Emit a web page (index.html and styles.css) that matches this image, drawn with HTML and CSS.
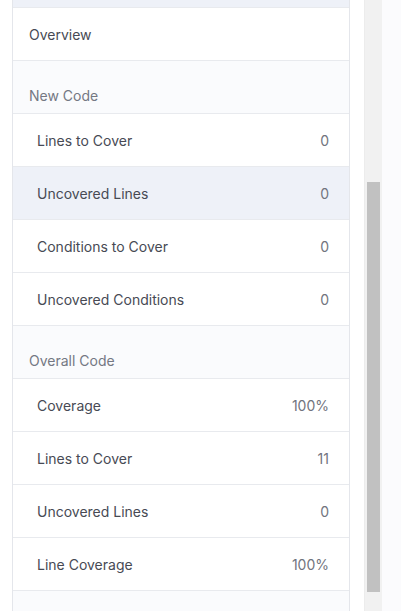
FILE: index.html
```html
<!DOCTYPE html>
<html>
<head>
<meta charset="utf-8">
<link rel="stylesheet" href="styles.css">
</head>
<body>
<div class="layout">
  <div class="panel">
    <div class="row row-partial"></div>
    <div class="row row-top"><span>Overview</span></div>
    <div class="row row-header"><span>New Code</span></div>
    <div class="row row-item"><span>Lines to Cover</span><span class="val">0</span></div>
    <div class="row row-item row-active"><span>Uncovered Lines</span><span class="val">0</span></div>
    <div class="row row-item"><span>Conditions to Cover</span><span class="val">0</span></div>
    <div class="row row-item"><span>Uncovered Conditions</span><span class="val">0</span></div>
    <div class="row row-header"><span>Overall Code</span></div>
    <div class="row row-item"><span>Coverage</span><span class="val">100%</span></div>
    <div class="row row-item"><span>Lines to Cover</span><span class="val">11</span></div>
    <div class="row row-item"><span>Uncovered Lines</span><span class="val">0</span></div>
    <div class="row row-item"><span>Line Coverage</span><span class="val">100%</span></div>
    <div class="row row-header"></div>
  </div>
  <div class="scrollbar"><div class="thumb"></div></div>
  <div class="side"></div>
</div>
</body>
</html>
```
FILE: styles.css
```css
html, body {
  margin: 0;
  padding: 0;
  background: #ffffff;
  overflow: hidden;
}
body {
  font-family: Inter, "Noto Sans", sans-serif;
  font-size: 14px;
  color: #474a54;
}
.layout {
  display: flex;
  height: 611px;
}
.panel {
  margin-left: 12px;
  width: 336px;
  border-left: 1px solid #e4e6eb;
  border-right: 1px solid #e4e6eb;
  height: 611px;
  overflow: hidden;
  flex: none;
}
.row {
  display: flex;
  align-items: center;
  justify-content: space-between;
  height: 51px;
  padding-top: 1px;
  border-bottom: 1px solid #e8eaee;
  box-sizing: content-box;
  line-height: 20px;
}
.row-partial {
  height: 7px;
  padding-top: 0;
  background: #eef1f8;
}
.row-top {
  padding-left: 16px;
  padding-right: 16px;
  background: #fff;
}
.row-header {
  padding: 0 16px 7px;
  height: 45px;
  align-items: flex-end;
  background: #fafbfd;
  color: #747883;
}
.row-item {
  padding-left: 24px;
  padding-right: 20px;
  background: #fff;
}
.row-active {
  background: #eef1f8;
}
.val {
  color: #71747e;
}
.scrollbar {
  margin-left: 14px;
  width: 17px;
  height: 611px;
  background: #f1f1f1;
  border-left: 1px solid #ececec;
  flex: none;
  display: flex;
  flex-direction: column;
  align-items: center;
}
.thumb {
  margin-top: 182px;
  width: 13px;
  height: 410px;
  background: #c1c1c1;
}
.side {
  flex: 1;
  background: #fbfbfd;
}
```
